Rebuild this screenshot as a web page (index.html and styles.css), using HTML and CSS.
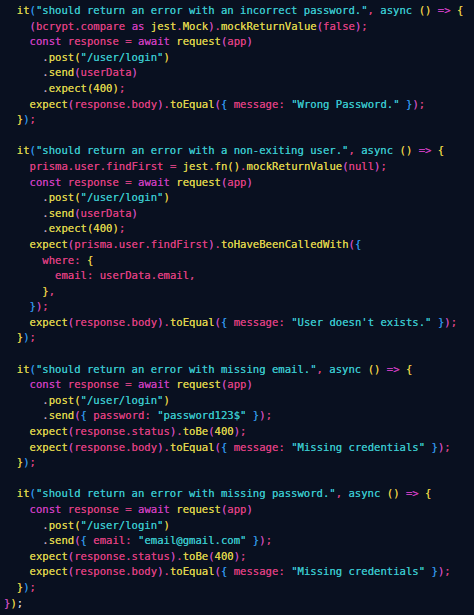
FILE: index.html
```html
<!DOCTYPE html>
<html>
<head>
<meta charset="utf-8">
<link rel="stylesheet" href="styles.css">
</head>
<body>
<div class="code">
<div class="ln">  <span class="f">it</span><span class="b3">(</span><span class="s">"should return an error with an incorrect password."</span><span class="p">,</span> <span class="s">async</span> <span class="b1">()</span> <span class="k">=&gt;</span> <span class="b1">{</span></div>
<div class="ln">    <span class="b2">(</span><span class="v">bcrypt</span><span class="p">.</span><span class="v">compare</span> <span class="k">as</span> <span class="f">jest</span><span class="p">.</span><span class="f">Mock</span><span class="b2">)</span><span class="p">.</span><span class="f">mockReturnValue</span><span class="b2">(</span><span class="v">false</span><span class="b2">)</span><span class="p">;</span></div>
<div class="ln">    <span class="k">const</span> <span class="v">response</span> <span class="p">=</span> <span class="k">await</span> <span class="f">request</span><span class="b2">(</span><span class="v">app</span><span class="b2">)</span></div>
<div class="ln">      <span class="d">.</span><span class="f">post</span><span class="b1">(</span><span class="s">"/user/login"</span><span class="b1">)</span></div>
<div class="ln">      <span class="d">.</span><span class="f">send</span><span class="b2">(</span><span class="v">userData</span><span class="b2">)</span></div>
<div class="ln">      <span class="d">.</span><span class="f">expect</span><span class="b1">(</span><span class="n">400</span><span class="b1">)</span><span class="p">;</span></div>
<div class="ln">    <span class="f">expect</span><span class="b2">(</span><span class="v">response</span><span class="p">.</span><span class="v">body</span><span class="b2">)</span><span class="p">.</span><span class="f">toEqual</span><span class="b2">(</span><span class="b3">{</span> <span class="v">message</span><span class="p">:</span> <span class="s">"Wrong Password."</span> <span class="b3">}</span><span class="b2">)</span><span class="p">;</span></div>
<div class="ln">  <span class="b1">}</span><span class="b3">)</span><span class="p">;</span></div>
<div class="ln"> </div>
<div class="ln">  <span class="f">it</span><span class="b3">(</span><span class="s">"should return an error with a non-exiting user."</span><span class="p">,</span> <span class="s">async</span> <span class="b1">()</span> <span class="k">=&gt;</span> <span class="b1">{</span></div>
<div class="ln">    <span class="v">prisma</span><span class="p">.</span><span class="v">user</span><span class="p">.</span><span class="v">findFirst</span> <span class="p">=</span> <span class="f">jest</span><span class="p">.</span><span class="f">fn</span><span class="b1">()</span><span class="p">.</span><span class="f">mockReturnValue</span><span class="b2">(</span><span class="v">null</span><span class="b2">)</span><span class="p">;</span></div>
<div class="ln">    <span class="k">const</span> <span class="v">response</span> <span class="p">=</span> <span class="k">await</span> <span class="f">request</span><span class="b2">(</span><span class="v">app</span><span class="b2">)</span></div>
<div class="ln">      <span class="d">.</span><span class="f">post</span><span class="b1">(</span><span class="s">"/user/login"</span><span class="b1">)</span></div>
<div class="ln">      <span class="d">.</span><span class="f">send</span><span class="b2">(</span><span class="v">userData</span><span class="b2">)</span></div>
<div class="ln">      <span class="d">.</span><span class="f">expect</span><span class="b1">(</span><span class="n">400</span><span class="b1">)</span><span class="p">;</span></div>
<div class="ln">    <span class="f">expect</span><span class="b2">(</span><span class="v">prisma</span><span class="p">.</span><span class="v">user</span><span class="p">.</span><span class="v">findFirst</span><span class="b2">)</span><span class="p">.</span><span class="f">toHaveBeenCalledWith</span><span class="b2">(</span><span class="b3">{</span></div>
<div class="ln">      <span class="v">where</span><span class="p">:</span> <span class="b1">{</span></div>
<div class="ln">        <span class="v">email</span><span class="p">:</span> <span class="v">userData</span><span class="p">.</span><span class="v">email</span><span class="p">,</span></div>
<div class="ln">      <span class="b1">}</span><span class="p">,</span></div>
<div class="ln">    <span class="b3">}</span><span class="b2">)</span><span class="p">;</span></div>
<div class="ln">    <span class="f">expect</span><span class="b2">(</span><span class="v">response</span><span class="p">.</span><span class="v">body</span><span class="b2">)</span><span class="p">.</span><span class="f">toEqual</span><span class="b2">(</span><span class="b3">{</span> <span class="v">message</span><span class="p">:</span> <span class="s">"User doesn't exists."</span> <span class="b3">}</span><span class="b2">)</span><span class="p">;</span></div>
<div class="ln">  <span class="b1">}</span><span class="b3">)</span><span class="p">;</span></div>
<div class="ln"> </div>
<div class="ln">  <span class="f">it</span><span class="b3">(</span><span class="s">"should return an error with missing email."</span><span class="p">,</span> <span class="s">async</span> <span class="b1">()</span> <span class="k">=&gt;</span> <span class="b1">{</span></div>
<div class="ln">    <span class="k">const</span> <span class="v">response</span> <span class="p">=</span> <span class="k">await</span> <span class="f">request</span><span class="b2">(</span><span class="v">app</span><span class="b2">)</span></div>
<div class="ln">      <span class="d">.</span><span class="f">post</span><span class="b1">(</span><span class="s">"/user/login"</span><span class="b1">)</span></div>
<div class="ln">      <span class="d">.</span><span class="f">send</span><span class="b2">(</span><span class="b3">{</span> <span class="v">password</span><span class="p">:</span> <span class="s">"password123$"</span> <span class="b3">}</span><span class="b2">)</span><span class="p">;</span></div>
<div class="ln">    <span class="f">expect</span><span class="b2">(</span><span class="v">response</span><span class="p">.</span><span class="v">status</span><span class="b2">)</span><span class="p">.</span><span class="f">toBe</span><span class="b2">(</span><span class="n">400</span><span class="b2">)</span><span class="p">;</span></div>
<div class="ln">    <span class="f">expect</span><span class="b2">(</span><span class="v">response</span><span class="p">.</span><span class="v">body</span><span class="b2">)</span><span class="p">.</span><span class="f">toEqual</span><span class="b2">(</span><span class="b3">{</span> <span class="v">message</span><span class="p">:</span> <span class="s">"Missing credentials"</span> <span class="b3">}</span><span class="b2">)</span><span class="p">;</span></div>
<div class="ln">  <span class="b1">}</span><span class="b3">)</span><span class="p">;</span></div>
<div class="ln"> </div>
<div class="ln">  <span class="f">it</span><span class="b3">(</span><span class="s">"should return an error with missing password."</span><span class="p">,</span> <span class="s">async</span> <span class="b1">()</span> <span class="k">=&gt;</span> <span class="b1">{</span></div>
<div class="ln">    <span class="k">const</span> <span class="v">response</span> <span class="p">=</span> <span class="k">await</span> <span class="f">request</span><span class="b2">(</span><span class="v">app</span><span class="b2">)</span></div>
<div class="ln">      <span class="d">.</span><span class="f">post</span><span class="b1">(</span><span class="s">"/user/login"</span><span class="b1">)</span></div>
<div class="ln">      <span class="d">.</span><span class="f">send</span><span class="b2">(</span><span class="b3">{</span> <span class="v">email</span><span class="p">:</span> <span class="s">"email@gmail.com"</span> <span class="b3">}</span><span class="b2">)</span><span class="p">;</span></div>
<div class="ln">    <span class="f">expect</span><span class="b2">(</span><span class="v">response</span><span class="p">.</span><span class="v">status</span><span class="b2">)</span><span class="p">.</span><span class="f">toBe</span><span class="b2">(</span><span class="n">400</span><span class="b2">)</span><span class="p">;</span></div>
<div class="ln">    <span class="f">expect</span><span class="b2">(</span><span class="v">response</span><span class="p">.</span><span class="v">body</span><span class="b2">)</span><span class="p">.</span><span class="f">toEqual</span><span class="b2">(</span><span class="b3">{</span> <span class="v">message</span><span class="p">:</span> <span class="s">"Missing credentials"</span> <span class="b3">}</span><span class="b2">)</span><span class="p">;</span></div>
<div class="ln">  <span class="b1">}</span><span class="b3">)</span><span class="p">;</span></div>
<div class="ln"><span class="b2">}</span><span class="b1">)</span><span class="w">;</span></div>
</div>
</body>
</html>
```
FILE: styles.css
```css
html, body {
  margin: 0;
  padding: 0;
  background: #091020;
}
.code {
  padding: 3px 0 0 4px;
  font-family: "DejaVu Sans Mono", "Liberation Mono", monospace;
  font-size: 10.6px;
  line-height: 15.6px;
  color: #c9c9d4;
  text-shadow: 0 0 0.6px currentColor;
}
.ln {
  white-space: pre;
  height: 15.6px;
}
.f { color: #ddd04a; }
.n { color: #ddd04a; }
.s { color: #38c4ca; }
.k { color: #c83cbc; }
.v { color: #da3d7e; }
.p { color: #d2407e; }
.d { color: #b8a0b8; }
.w { color: #c9c9d4; }
.b1 { color: #e2c843; }
.b2 { color: #c64ab8; }
.b3 { color: #2e8fe0; }
```
